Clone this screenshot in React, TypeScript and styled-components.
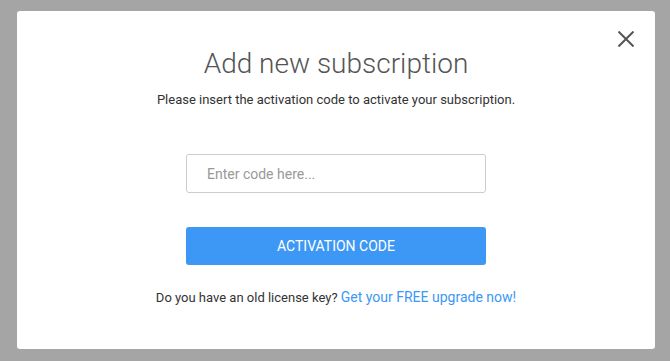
import React from "react";
import styled, { createGlobalStyle } from "styled-components";

const Global = createGlobalStyle`
  html, body { margin: 0; padding: 0; }
  body {
    background: #a5a5a5;
    font-family: Roboto, "Liberation Sans", Arial, sans-serif;
    width: 670px;
    height: 361px;
    overflow: hidden;
  }
  * { box-sizing: border-box; }
`;

const Overlay = styled.div`
  width: 670px;
  height: 361px;
  padding: 11px 15px 12px 17px;
`;

const Modal = styled.div`
  position: relative;
  width: 638px;
  height: 338px;
  background: #ffffff;
  border-radius: 3px;
  display: flex;
  flex-direction: column;
  align-items: center;
  padding-top: 36px;
`;

const CloseButton = styled.button`
  position: absolute;
  top: 20px;
  right: 21px;
  width: 16px;
  height: 16px;
  padding: 0;
  border: none;
  background: transparent;
  display: flex;
  align-items: center;
  justify-content: center;
  cursor: pointer;
`;

const Title = styled.h1`
  margin: 0;
  font-weight: 300;
  font-size: 28px;
  line-height: 34px;
  color: #555;
`;

const Subtitle = styled.p`
  margin: 11px 0 0;
  font-size: 13px;
  line-height: 16px;
  color: #333;
`;

const CodeInput = styled.input`
  margin-top: 46px;
  width: 300px;
  height: 39px;
  border: 1px solid #cccccc;
  border-radius: 3px;
  padding: 0 20px;
  font-family: inherit;
  font-size: 14px;
  color: #333;
  outline: none;
  &::placeholder { color: #999; }
`;

const ActivateButton = styled.button`
  margin-top: 34px;
  width: 300px;
  height: 38px;
  border: none;
  border-radius: 3px;
  background: #3c97f5;
  color: #fff;
  font-family: inherit;
  font-size: 14px;
  text-transform: uppercase;
  cursor: pointer;
`;

const Footer = styled.p`
  margin: 24px 0 0;
  font-size: 13px;
  line-height: 16px;
  color: #333;
`;

const Link = styled.a`
  font-size: 14px;
  color: #3c97f5;
  text-decoration: none;
`;

export default function App() {
  return (
    <>
      <Global />
      <Overlay>
        <Modal>
          <CloseButton aria-label="Close">
            <svg width="16" height="16" viewBox="0 0 16 16">
              <path d="M0.5 0.5 L15.5 15.5 M15.5 0.5 L0.5 15.5" stroke="#555" strokeWidth="2" />
            </svg>
          </CloseButton>
          <Title>Add new subscription</Title>
          <Subtitle>Please insert the activation code to activate your subscription.</Subtitle>
          <CodeInput placeholder="Enter code here..." />
          <ActivateButton>Activation code</ActivateButton>
          <Footer>
            Do you have an old license key? <Link href="#">Get your FREE upgrade now!</Link>
          </Footer>
        </Modal>
      </Overlay>
    </>
  );
}
